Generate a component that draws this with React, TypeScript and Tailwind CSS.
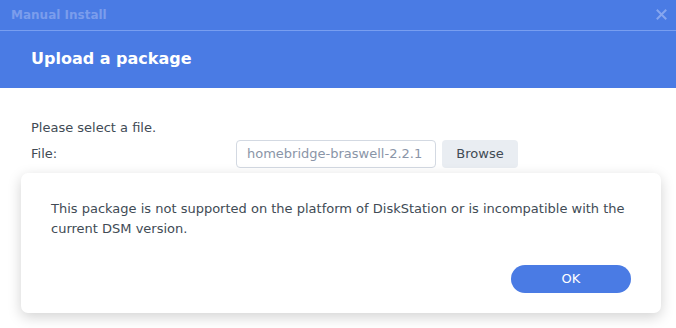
import React from "react";

export default function App() {
  return (
    <div className="relative w-[676px] h-[328px] overflow-hidden bg-white" style={{ fontFamily: "'DejaVu Sans', Verdana, sans-serif" }}>
      <div className="bg-[#4a7be4] h-[88px] flex flex-col">
        <div className="h-[31px] flex items-center justify-between pl-[11px] pr-[9px] border-b border-[#789ef0]">
          <span className="text-[12px] font-bold text-[#7b9dec]">Manual Install</span>
          <svg width="11" height="11" viewBox="0 0 11 11" className="mb-[2px]">
            <path d="M1.5 1.5 L9.5 9.5 M9.5 1.5 L1.5 9.5" stroke="#86a6ef" strokeWidth="2" strokeLinecap="square" />
          </svg>
        </div>
        <div className="flex-1 flex items-center pl-[31px] pb-[1px]">
          <span className="text-[16px] font-bold text-white">Upload a package</span>
        </div>
      </div>
      <div className="pl-[31px] pt-[30px] text-[13px] text-[#414b55]">
        <div className="leading-[20px]">Please select a file.</div>
        <div className="flex items-center mt-[2px]">
          <div className="w-[205px]">File:</div>
          <div className="w-[200px] h-[28px] border border-[#d3d9e2] rounded-[4px] flex items-center pl-[10px] text-[#8a95a7] overflow-hidden whitespace-nowrap">homebridge-braswell-2.2.1</div>
          <div className="ml-[6px] w-[76px] h-[28px] rounded-[4px] bg-[#e9edf2] flex items-center justify-center text-[#414b55]">Browse</div>
        </div>
      </div>
      <div className="absolute left-[21px] top-[173px] w-[640px] h-[140px] bg-white rounded-[7px] shadow-[0_4px_14px_rgba(0,0,0,0.18)] flex flex-col pl-[30px] pr-[30px] pt-[26px]">
        <p className="text-[13px] leading-[20px] text-[#414b55]">
          This package is not supported on the platform of DiskStation or is incompatible with the current DSM version.
        </p>
        <div className="flex justify-end mt-auto mb-[20px]">
          <div className="w-[120px] h-[28px] rounded-full bg-[#4a7be4] text-white text-[13px] flex items-center justify-center">OK</div>
        </div>
      </div>
    </div>
  );
}
